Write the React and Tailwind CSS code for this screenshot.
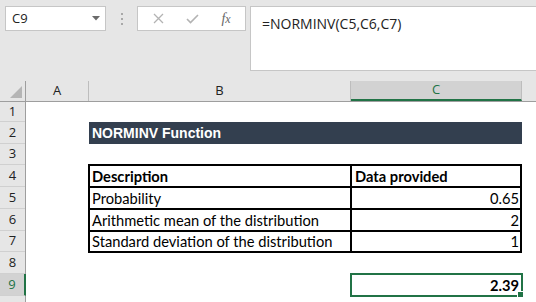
const rowHeads = [
  { n: "1", h: 20 },
  { n: "2", h: 22 },
  { n: "3", h: 21 },
  { n: "4", h: 22 },
  { n: "5", h: 22 },
  { n: "6", h: 22 },
  { n: "7", h: 21 },
  { n: "8", h: 22 },
  { n: "9", h: 22, active: true },
  { n: "", h: 22 },
];

const tableRows = [
  { label: "Description", value: "Data provided", head: true, h: 20 },
  { label: "Probability", value: "0.65", h: 20 },
  { label: "Arithmetic mean of the distribution", value: "2", h: 20 },
  { label: "Standard deviation of the distribution", value: "1", h: 19 },
];

export default function App() {
  return (
    <div
      className="w-[536px] h-[302px] overflow-hidden bg-[#e6e6e6] text-[#222]"
      style={{ fontFamily: "'Open Sans', 'Noto Sans', sans-serif" }}
    >
      {/* Formula bar */}
      <div className="h-[81px] flex items-start pt-[6px] pl-[5px]">
        <div className="w-[101px] h-[25px] bg-white border border-[#c6c6c6] flex items-center justify-between pl-[6px] pr-[5px]">
          <span className="text-[13px] leading-none">C9</span>
          <svg width="8" height="5" viewBox="0 0 8 5">
            <path d="M0 0 H8 L4 4.5 Z" fill="#6b6b6b" />
          </svg>
        </div>
        <div className="w-[31px] h-[25px] flex flex-col items-center justify-center gap-[3px]">
          <span className="w-[2px] h-[2px] bg-[#a8a8a8]" />
          <span className="w-[2px] h-[2px] bg-[#a8a8a8]" />
          <span className="w-[2px] h-[2px] bg-[#a8a8a8]" />
        </div>
        <div className="w-[109px] h-[25px] bg-white border border-[#c6c6c6] flex items-center">
          <div className="w-[38px] flex justify-center pl-[2px]">
            <svg width="11" height="11" viewBox="0 0 11 11">
              <path d="M1 1 L10 10 M10 1 L1 10" stroke="#b3b3b3" strokeWidth="1.3" />
            </svg>
          </div>
          <div className="w-[33px] flex justify-center">
            <svg width="13" height="10" viewBox="0 0 13 10">
              <path d="M1 5 L4.5 8.5 L12 1" stroke="#b3b3b3" strokeWidth="1.6" fill="none" />
            </svg>
          </div>
          <div className="flex-1 flex justify-center pr-[2px]">
            <span
              className="italic text-[14px] leading-none text-[#666]"
              style={{ fontFamily: "'Liberation Serif', serif" }}
            >
              f<span className="text-[12px]">x</span>
            </span>
          </div>
        </div>
        <div className="ml-[4px] flex-1 h-[65px] bg-white border-y border-l border-[#c6c6c6] pl-[11px] pt-[4px]">
          <span className="text-[14px]">=NORMINV(C5,C6,C7)</span>
        </div>
      </div>

      {/* Column headers */}
      <div className="h-[21px] flex border-b border-[#9e9e9e] text-[13px]">
        <div className="w-[26px] border-r border-[#9e9e9e] flex items-end justify-end pr-[3px] pb-[3px]">
          <svg width="12" height="12" viewBox="0 0 12 12">
            <path d="M12 0 V12 H0 Z" fill="#b5b5b5" />
          </svg>
        </div>
        <div className="w-[63px] border-r border-[#bdbdbd] flex items-center justify-center">A</div>
        <div className="w-[262px] border-r border-[#bdbdbd] flex items-center justify-center">B</div>
        <div className="w-[171px] border-r border-[#bdbdbd] bg-[#d2d2d2] border-b-2 border-b-[#217346] flex items-center justify-center text-[#217346]">
          C
        </div>
        <div className="flex-1" />
      </div>

      {/* Sheet */}
      <div className="flex">
        <div className="w-[26px] border-r border-[#9e9e9e] flex flex-col text-[13px]">
          {rowHeads.map((r, i) => (
            <div
              key={i}
              style={{ height: r.h }}
              className={
                r.active
                  ? "shrink-0 border-b border-[#d0d0d0] bg-[#d2d2d2] text-[#217346] flex items-center justify-center border-r-2 border-r-[#217346] -mr-[1px]"
                  : "shrink-0 border-b border-[#d0d0d0] flex items-center justify-center"
              }
            >
              {r.n}
            </div>
          ))}
        </div>

        <div
          className="flex-1 h-[220px] bg-white flex flex-col text-[14.7px] text-black"
          style={{ fontFamily: "Lato, 'Open Sans', sans-serif" }}
        >
          <div className="h-[20px] shrink-0" />
          <div
            className="h-[22px] shrink-0 ml-[63px] w-[433px] bg-[#333f4f] text-white font-bold flex items-center pl-[3px] text-[14px]"
            style={{ fontFamily: "'Liberation Sans', Arial, sans-serif" }}
          >
            NORMINV Function
          </div>
          <div className="h-[20px] shrink-0" />

          <div className="ml-[62px] w-[434px] border-2 border-black shrink-0">
            {tableRows.map((r, i) => (
              <div
                key={r.label}
                style={{ height: r.h }}
                className={
                  i < tableRows.length - 1
                    ? "box-content flex border-b-2 border-black"
                    : "box-content flex"
                }
              >
                <div
                  className={
                    r.head
                      ? "w-[262px] border-r-2 border-black pl-[2px] font-bold flex items-center"
                      : "w-[262px] border-r-2 border-black pl-[2px] flex items-center"
                  }
                >
                  {r.label}
                </div>
                <div
                  className={
                    r.head
                      ? "flex-1 pl-[3px] font-bold flex items-center"
                      : "flex-1 pr-[1px] flex items-center justify-end"
                  }
                >
                  {r.value}
                </div>
              </div>
            ))}
          </div>

          <div className="h-[20px] shrink-0" />
          <div className="ml-[324px] w-[173px] h-[24px] shrink-0 border-2 border-[#217346] relative flex items-center justify-end pr-[2px] font-bold">
            2.39
            <span className="absolute -right-[3px] -bottom-[3px] w-[5px] h-[5px] bg-[#217346] border border-white box-content" />
          </div>
        </div>
      </div>
    </div>
  );
}
